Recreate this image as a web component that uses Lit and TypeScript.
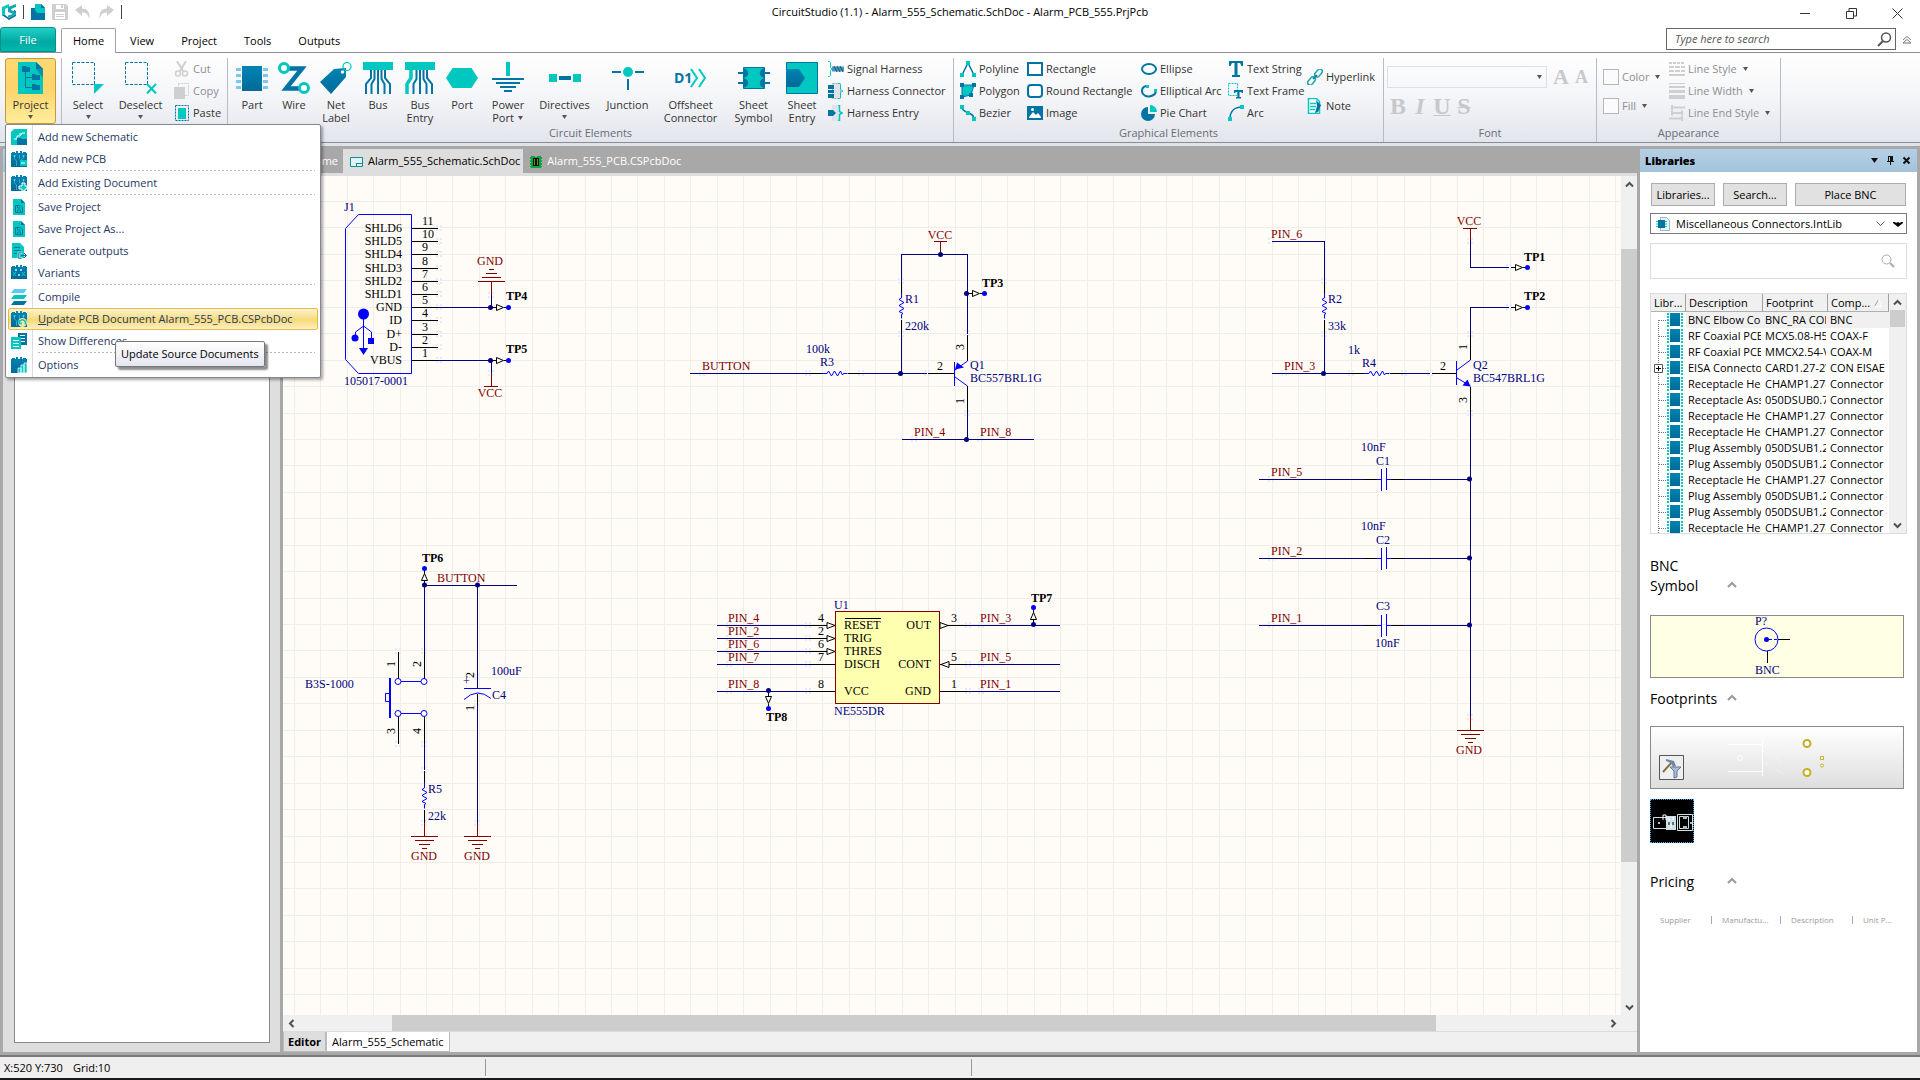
import { LitElement, html, svg, css, nothing } from "lit";
import { customElement, state } from "lit/decorators.js";
import { classMap } from "lit/directives/class-map.js";

const TEAL = "#00c8c0";
const BLUE = "#0074a2";
const GREY = "#cfcfcf";

const icon = (w: number, h: number, body: unknown) =>
  html`<svg class="ic" width=${w} height=${h} viewBox="0 0 ${w} ${h}" aria-hidden="true">${body}</svg>`;

/* ---------- quick access ---------- */
const logoIcon = icon(16, 16, svg`
  <path d="M7 0L0 3v8l3 2V5l4-2z" fill=${TEAL}/><path d="M0 11l7 5 7-4V7l-2-1v5l-5 3-4-3z" fill="#0d6f98"/>
  <path d="M14 0L6 3v5l5 2-5 1.500V14l8-3V8L9 6V5l5-2z" fill="#16a6b4"/>`);
const openIcon = icon(14, 16, svg`
  <path d="M0 4h4l1 2h9v10H0z" fill=${BLUE}/><path d="M4 0h6l4 4v5H6L4 6z" fill=${TEAL}/><path d="M10 0l4 4h-4z" fill=${BLUE}/>`);
const saveIcon = icon(16, 16, svg`
  <path d="M0 0h14l2 2v14H0z" fill=${GREY}/><path d="M4 1h8v4H4zM3 8h10v7H3z" fill="#fff"/><path d="M9 1h2v3H9zM4 10h8v1H4zM4 12h8v1H4z" fill=${GREY}/>`);
const undoIcon = icon(16, 16, svg`<path d="M0 6l7-5v3.500c5 0 8 3 7.500 11C13 10 11 8.500 7 8.500V12z" fill=${GREY}/>`);
const redoIcon = icon(16, 16, svg`<path d="M16 6L9 1v3.500c-5 0-8 3-7.500 11C3 10 5 8.500 9 8.500V12z" fill=${GREY}/>`);

/* ---------- large ribbon icons ---------- */
const big: Record<string, unknown> = {
  project: icon(25, 32, svg`
    <path d="M0 0h18l7 7v25H0z" fill=${TEAL}/><path d="M18 0l7 7v9l-7-9z" fill="#0796a8"/><path d="M18 0l7 7h-7z" fill=${BLUE}/>
    <path d="M4 4h4l1 1h3v5H4zM14 12h3l1 1h4v5h-8zM14 22h3l1 1h4v5h-8z" fill=${BLUE}/>
    <path d="M7.500 10v15.500H14M7.500 15.500H14" fill="none" stroke=${BLUE}/>`),
  select: icon(32, 32, svg`
    <path d="M.5.5h22v22H.5z" fill="none" stroke=${BLUE} stroke-dasharray="3 1.500"/><path d="M22 22h10L22 32z" fill=${TEAL}/>`),
  deselect: icon(32, 32, svg`
    <path d="M.5.5h22v22H.5z" fill="none" stroke=${BLUE} stroke-dasharray="3 1.500"/><path d="M22 22l9 9.500M31 22l-9 9.500" stroke=${TEAL} stroke-width="2"/>`),
  part: icon(32, 32, svg`
    <path d="M6 4h20v25H6z" fill="url(#gb)"/>
    <path d="M0 7.500h5M0 13.500h5M0 19.500h5M0 25.500h5M27 7.500h5M27 13.500h5M27 19.500h5M27 25.500h5" stroke="#7ac9ea" stroke-width="3"/>`),
  wire: icon(32, 32, svg`
    <path d="M7 6.500H24L8 26.500H26" fill="none" stroke=${BLUE} stroke-width="4.500"/>
    <circle cx="6" cy="6" r="4.500" fill="#fff" stroke=${TEAL} stroke-width="3"/><circle cx="26" cy="26" r="4.500" fill="#fff" stroke=${TEAL} stroke-width="3"/>`),
  netlabel: icon(32, 32, svg`
    <path d="M14 7l12-1v9L11 32 0 20z" fill="url(#gb)"/><circle cx="22.500" cy="10" r="1.800" fill="#fff"/>
    <circle cx="27" cy="4.500" r="4" fill="none" stroke=${TEAL} stroke-width="1.200"/>`),
  bus: icon(30, 32, svg`
    <path d="M0 0h30v8H0z" fill=${TEAL}/>
    <path d="M8 8v8l-5 6v10M11.500 8v9l-3 5v10M15 8v24M18.500 8v9l3 5v10M22 8v8l5 6v10" fill="none" stroke=${BLUE} stroke-width="2"/>`),
  busentry: icon(30, 32, svg`
    <path d="M0 0h30v8H0z" fill=${TEAL}/><path d="M6 8v8l-4 6v10" fill="none" stroke=${TEAL} stroke-width="3.500"/>
    <path d="M11.500 8v9l-3 5v10M15 8v24M18.500 8v9l3 5v10M22 8v8l5 6v10" fill="none" stroke=${BLUE} stroke-width="2"/>`),
  port: icon(32, 32, svg`<path d="M6.500 6h19L32 16l-6.500 10h-19L0 16z" fill=${TEAL}/>`),
  powerport: icon(32, 32, svg`
    <path d="M16 0v14" stroke=${TEAL} stroke-width="4"/>
    <path d="M0 17h32M4 21h24M8 25h16M12 29h8" stroke=${BLUE} stroke-width="2"/>`),
  directives: icon(32, 32, svg`
    <path d="M0 12h8v8H0zM24 12h8v8h-8z" fill=${TEAL}/><path d="M10 14h12v4H10z" fill=${BLUE}/>`),
  junction: icon(32, 32, svg`
    <path d="M0 10h9M23 10h9M16 17v11" stroke=${BLUE} stroke-width="2"/><circle cx="16" cy="10" r="5" fill=${TEAL}/>`),
  offsheet: icon(34, 32, svg`
    <text x="0" y="21" class="glyph">D1</text>
    <path d="M17 7l6 9-6 9M25 7l6 9-6 9" fill="none" stroke=${TEAL} stroke-width="2"/>`),
  sheetsymbol: icon(32, 32, svg`
    <path d="M5.500 5.500h21v21h-21z" fill=${TEAL} stroke=${BLUE}/>
    <path d="M0 11h5M0 21h5M27 11h5M27 21h5" stroke=${BLUE} stroke-width="2"/>
    <path d="M5 6c7 1 7 9 0 10zM5 16c7 1 7 9 0 10zM27 6c-7 1-7 9 0 10zM27 16c-7 1-7 9 0 10z" fill=${BLUE}/>`),
  sheetentry: icon(32, 32, svg`
    <path d="M.5.5h31v31H.5z" fill=${TEAL} stroke=${BLUE}/><path d="M0 7h13l6 9-6 9H0z" fill="url(#gb)"/>`),
};

/* ---------- small ribbon icons ---------- */
const small: Record<string, unknown> = {
  cut: icon(16, 16, svg`
    <path d="M3 0l6 10M12 0L6 10" stroke=${GREY} stroke-width="2"/><circle cx="4" cy="12.500" r="2.500" fill="none" stroke=${GREY} stroke-width="1.500"/><circle cx="11" cy="12.500" r="2.500" fill="none" stroke=${GREY} stroke-width="1.500"/>`),
  copy: icon(16, 16, svg`<path d="M4.500.5h10v12h-10z" fill="none" stroke=${GREY} stroke-dasharray="2 1"/><path d="M0 4h11v12H0z" fill=${GREY}/>`),
  paste: icon(16, 16, svg`<path d="M1.500.5h13v15h-13z" fill="none" stroke=${BLUE} stroke-dasharray="2 1"/><path d="M4 3h8v11H4z" fill=${TEAL}/>`),
  sigharness: icon(16, 16, svg`
    <path d="M0 .5h1.500l1 1v5l1.500 1.500-1.500 1.500v5l-1 1H0" fill="none" stroke=${TEAL}/><path d="M4 5.500h12v5H4z" fill="#4a94b8"/><path d="M6 5l3 6M9 5l3 6M12 5l3 6" stroke="#075a80"/>`),
  harnessconn: icon(16, 16, svg`
    <path d="M4.500.5h8v15h-8z" fill="#dfe4ea" stroke="#9aa"  stroke-dasharray="2 1"/>
    <path d="M0 2h6v4H0zM0 7h6v3H0zM0 11h6v4H0z" fill=${BLUE}/><path d="M10 .5h1.500l1 1v5L15 8l-2.500 1.500v5l-1 1H10" fill="none" stroke=${TEAL}/>`),
  harnessentry: icon(16, 16, svg`
    <path d="M4 0h7v16H4z" fill="#dfe4ea"/><path d="M0 5h5l3 3-3 3H0z" fill=${BLUE}/><path d="M10 .5h1.500v6L14 8l-2.500 1.500v6H10" fill="none" stroke=${TEAL} stroke-width="1.500"/>`),
  polyline: icon(16, 16, svg`<path d="M2 14L8 2l6 12" fill="none" stroke=${BLUE} stroke-width="1.500"/><path d="M6 0h4v4H6zM0 12h4v4H0zM12 12h4v4h-4z" fill=${TEAL}/>`),
  polygon: icon(16, 16, svg`<path d="M2 2h12l-3 10-9 2z" fill=${TEAL} stroke=${BLUE}/><path d="M0 0h4v4H0zM12 0h4v4h-4zM0 12h4v4H0zM9 10h4v4H9z" fill=${BLUE}/>`),
  bezier: icon(16, 16, svg`<path d="M2 2c0 7 12 4 12 12" fill="none" stroke=${BLUE} stroke-width="1.500"/><path d="M0 0h4v4H0zM6 6h4v4H6zM12 12h4v4h-4z" fill=${TEAL}/>`),
  rectangle: icon(16, 16, svg`<path d="M1 2h14v12H1z" fill="#fff" stroke=${BLUE} stroke-width="2"/>`),
  roundrect: icon(16, 16, svg`<rect x="1" y="2" width="14" height="12" rx="3" fill="#fff" stroke=${BLUE} stroke-width="2"/>`),
  image: icon(16, 16, svg`<path d="M0 1h16v14H0z" fill=${BLUE}/><path d="M2 12l4-5 3 3 2-2 3 4v1H2z" fill="#fff"/><circle cx="5.500" cy="4.500" r="1.500" fill="#fff"/>`),
  ellipse: icon(16, 16, svg`<ellipse cx="8" cy="8" rx="7" ry="5" fill="#fff" stroke=${BLUE} stroke-width="2"/>`),
  ellarc: icon(16, 16, svg`<path d="M6 3C1 3 0 8 2 11c3 4 12 3 13-3" fill="none" stroke=${BLUE} stroke-width="2"/><path d="M5 2h3v3H5zM13 6h3v3h-3z" fill=${TEAL}/>`),
  pie: icon(16, 16, svg`<path d="M7 2v7h7a7 7 0 1 1-7-7z" fill=${BLUE}/><path d="M9 0a7 7 0 0 1 7 7H9z" fill=${TEAL}/>`),
  textstring: icon(16, 16, svg`<path d="M1 0h14v5h-1.500L12 2h-2.500v12H12v2H4v-2h2.500V2H4L2.500 5H1z" fill=${BLUE}/>`),
  textframe: icon(16, 16, svg`<path d="M.5.5h9v12h-9z" fill="none" stroke=${TEAL} stroke-dasharray="2 1"/><path d="M6 7h9v3h-1l-1-1h-1.500v5H13v1.500H8V14h1.500V9H8l-1 1H6z" fill=${BLUE}/>`),
  arc: icon(16, 16, svg`<path d="M2 14C2 7 6 2 14 2" fill="none" stroke=${BLUE} stroke-width="1.500"/><path d="M0 12h4v4H0zM12 0h4v4h-4z" fill=${TEAL}/>`),
  hyperlink: icon(16, 16, svg`
    <rect x="7" y="1.500" width="9" height="5" rx="2.500" transform="rotate(-50 11.500 4)" fill="none" stroke="#1aa3a8" stroke-width="1.500"/>
    <rect x="0" y="9.500" width="9" height="5" rx="2.500" transform="rotate(-50 4.500 12)" fill="none" stroke="#1aa3a8" stroke-width="1.500"/><path d="M6 10l4-4" stroke=${BLUE} stroke-width="1.500"/>`),
  note: icon(16, 16, svg`
    <path d="M1.500.5h8l3 3v12h-11z" fill="#fff" stroke=${TEAL} stroke-width="1.500"/><path d="M3 5.500h6M3 8.500h6M3 11.500h5" stroke=${TEAL} stroke-width="1.500"/><path d="M9 2l5 5-3 7-3 1 2-7z" fill=${BLUE}/>`),
  linestyle: icon(16, 16, svg`<path d="M0 2h16" stroke=${GREY} stroke-width="2" stroke-dasharray="3 1"/><path d="M0 6h16M0 10h16" stroke=${GREY} stroke-width="2" stroke-dasharray="5 1"/><path d="M0 14h16" stroke=${GREY} stroke-width="2"/>`),
  linewidth: icon(16, 16, svg`<path d="M0 0h16v1H0zM0 3h16v2H0zM0 7h16v3H0zM0 12h16v4H0z" fill=${GREY}/>`),
  lineend: icon(16, 16, svg`<path d="M2 2.500h14M2 8h12M0 13.500h14M3 0v5M3 5.500v5M13 5.500v5M13 11v5" stroke=${GREY} stroke-width="2"/>`),
};

/* ---------- menu icons ---------- */
const boardShape = "M0 2h1V1h3v1h1V0h2v2h2V0h2v2h1V1h3v1h1v14H0z";
const board = svg`
  <path d=${boardShape} fill="url(#gb)"/>
  <path d="M3.500 5v3l2 2v5M8.500 4v4M12.500 5v2l-3 2" fill="none" stroke="#2fa8d0"/>
  <circle cx="3.500" cy="5" r="1" fill="#5fd0e8"/><circle cx="12.500" cy="5" r="1" fill="#5fd0e8"/>`;
const menuIcons: Record<string, unknown> = {
  schematic: icon(16, 16, svg`<path d="M0 3l3-3h13v16H0z" fill=${TEAL}/><path d="M3 10h3V7h3l2-3h3M8 5h3" fill="none" stroke="#fff"/><path d="M6 9h4l1 1h5v6H6z" fill=${BLUE}/>`),
  pcb: icon(16, 16, svg`${board}<path d="M9 9h7v6H9z" fill=${TEAL}/><path d="M11 11v2M13 11v2" stroke="#fff"/>`),
  existing: icon(16, 16, svg`${board}<path d="M8 11h3V8h3v3h2v3h-2v2h-3v-2H8z" fill=${TEAL} stroke="#fff"/>`),
  save: icon(16, 16, svg`<path d="M2 0h8l4 4v12H2z" fill=${TEAL}/><path d="M10 0l4 4h-4z" fill=${BLUE}/><path d="M4.500 6.500h5l2 2v5h-7zM6.500 7v2h3M6.500 13v-2h3v2" fill="none" stroke=${BLUE}/>`),
  generate: icon(16, 16, svg`<path d="M1 0h8l4 4v11H1z" fill=${TEAL}/><path d="M3 4.500h6M3 7.500h7M3 10.500h3" stroke=${BLUE}/><path d="M7 9h4v1.500H8.500v4H11V16H7z" fill=${BLUE} stroke="#fff" stroke-width=".5"/><path d="M10 12.500h5M13 10l2.500 2.500L13 15" fill="none" stroke=${BLUE}/>`),
  variants: icon(16, 16, svg`<path d="M0 2h1V1h3v1h1V0h2v2h2V0h2v2h1V1h3v1h1v12H0z" fill="url(#gb)"/><path d="M2 7l3 4M5 7l-3 4M11 7l3 4M14 7l-3 4" stroke=${TEAL}/><path d="M4 4h2v2H4zM9 4h2v2H9zM7 9h2v2H7z" fill="#8fdcf0"/>`),
  compile: icon(16, 16, svg`<path d="M3 0h13l-3 4H0z" fill="#5bcbf2"/><path d="M3 6h13l-3 4H0z" fill=${TEAL}/><path d="M3 12h13l-3 4H0z" fill=${BLUE}/>`),
  update: icon(16, 16, svg`${board}<circle cx="11.500" cy="11.500" r="4.500" fill="#f7e6a0"/><path d="M8.500 12a3 3 0 1 1 5.500 1.500M8 9v3.500h3" fill="none" stroke=${TEAL} stroke-width="1.500"/>`),
  differences: icon(16, 16, svg`<path d="M7 0h9v12H7z" fill=${BLUE}/><path d="M9 2.500h5M9 5.500h5M9 8.500h5" stroke="#fff"/><path d="M0 4h10v12H0z" fill=${TEAL}/><path d="M2 7.500h6M2 10.500h6M2 13.500h6" stroke="#fff"/>`),
  options: icon(16, 16, svg`<path d=${boardShape} fill="url(#gb)"/><path d="M7 11h3v5H7zM10 8h3v8h-3zM13 6h3v10h-3z" fill=${TEAL} stroke="#fff" stroke-width=".7"/>`),
};

const arrow = html`<svg class="arrow" width="7" height="4" viewBox="0 0 7 4" aria-hidden="true"><path d="M1 0h5L3.500 4z" fill="#555"/></svg>`;
const chevron = (d: string) =>
  html`<svg class="ic" width="9" height="9" viewBox="0 0 9 9" aria-hidden="true"><path d=${d} fill="none" stroke="#505050" stroke-width="2"/></svg>`;
const UP = "M1 6.500L4.500 3 8 6.500";
const DOWN = "M1 2.500L4.500 6 8 2.500";
const LEFT = "M6.500 1L3 4.500 6.500 8";
const RIGHT = "M2.500 1L6 4.500 2.500 8";

/* ---------- schematic primitives ---------- */
type Kind = "navy" | "blk" | "blu" | "red";
const h = (y: number, x1: number, x2: number, k: Kind = "navy") => svg`<path class=${k} d="M${x1} ${y + 0.5}H${x2}"/>`;
const v = (x: number, y1: number, y2: number, k: Kind = "navy") => svg`<path class=${k} d="M${x + 0.5} ${y1}V${y2}"/>`;
const t = (x: number, y: number, s: string, c = "tn") => svg`<text class=${c} x=${x} y=${y}>${s}</text>`;
const rot = (cx: number, cy: number, s: string) =>
  svg`<text class="tk mid" transform="translate(${cx + 4} ${cy}) rotate(-90)">${s}</text>`;
const dot = (x: number, y: number) => svg`<circle class="dot" cx=${x} cy=${y} r="2.500"/>`;
const end = (x: number, y: number) =>
  svg`<path class="end" d="M${x - 3} ${y - 3}h2v2h-2zM${x + 1} ${y - 3}h2v2h-2zM${x - 3} ${y + 1}h2v2h-2zM${x + 1} ${y + 1}h2v2h-2z"/>`;
const probe = (x: number, y: number, a: number) => svg`
  <g transform="translate(${x + 0.5} ${y + 0.5}) rotate(${a})">
    <path class="blk" d="M0 0H6M12 0H16"/><path class="tri" d="M5 -3L12 0L5 3z"/><circle class="pt" cx="17" cy="0" r="2.500"/>
  </g>`;
const arrowhead = (x: number, y: number, a: number) =>
  svg`<path class="tri" transform="translate(${x} ${y + 0.5}) rotate(${a})" d="M0 -3L8 0L0 3z"/>`;
const gnd = (x: number, y: number, dir = 1) =>
  [13, 9, 5, 2].map((w, i) => h(y + dir * i * 4, x - w, x + w + 1, "red"));
const zigH = (x: number, y: number) =>
  svg`<path class="zig" d="M${x} ${y + 0.5}h5l1.500 -2.500l3 5l3 -5l3 5l3 -5l2 4l1 -1.500h4"/>`;
const zigV = (x: number, y: number) =>
  svg`<path class="zig" d="M${x + 0.5} ${y}v5l-2.500 1.500l5 3l-5 3l5 3l-5 3l4 2l-1.500 1v4"/>`;

const cap = (y: number, pin: string) => [
  end(1271, y), h(y, 1259, 1364), h(y, 1364, 1377, "blk"), h(y, 1377, 1381, "blu"), v(1381, y - 10, y + 12, "blu"),
  v(1386, y - 11, y + 11, "blu"), h(y, 1386, 1391, "blu"), h(y, 1391, 1404, "blk"), h(y, 1404, 1470), dot(1469.5, y),
  t(1271, y - 3, pin, "tr"),
];

const schematic = () => {
  const grid: unknown[] = [];
  for (let i = -1; i < 52; i++) {
    const x = Math.round(1245.3 - 36 * 26.43 + i * 26.43);
    if (x >= 283) grid.push(svg`<path class="grid" d="M${x + 0.5} 176V1015"/>`);
    const y = Math.round(201 + (i - 1) * 26.44);
    if (y < 1015) grid.push(svg`<path class="grid" d="M283 ${y + 0.5}H1620"/>`);
  }
  const names = ["SHLD6", "SHLD5", "SHLD4", "SHLD3", "SHLD2", "SHLD1", "GND", "ID", "D+", "D-", "VBUS"];
  const left: [number, string, string, string][] = [
    [625, "PIN_4", "4", "RESET"], [638, "PIN_2", "2", "TRIG"], [651, "PIN_6", "6", "THRES"], [664, "PIN_7", "7", "DISCH"], [691, "PIN_8", "8", "VCC"],
  ];
  const right: [number, string, string, string][] = [
    [625, "PIN_3", "3", "OUT"], [664, "PIN_5", "5", "CONT"], [691, "PIN_1", "1", "GND"],
  ];
  return svg`<g transform="translate(-283 -176)">
    ${grid}
    <!-- J1 connector -->
    ${t(344, 211, "J1")}
    <path class="zig" d="M345.500 228.500L358.500 214.500H411.500V373.500H358.500L345.500 359.500z"/>
    ${names.map((n, i) => {
      const y = Math.round(228 + i * 13.2);
      return [end(439, y), h(y, 412, 438, "blk"), t(402, y + 4, n, "tk end-a"), t(422, y - 3, String(11 - i), "tk")];
    })}
    <circle cx="363.500" cy="314" r="5.500" class="fb"/><circle cx="355" cy="338" r="3.500" class="fb"/><path class="fb" d="M368 338h6v6h-6zM359 348h9l-4.500 7z"/>
    <path class="zig" d="M363.500 314V350M355.500 338V332L363.500 326L371.500 332V340"/>
    ${t(344, 385, "105017-0001")}
    ${h(307, 438, 491)}${end(491, 295)}${v(491, 295, 307)}${v(491, 281, 295, "red")}${gnd(491, 281, -1)}${t(490, 265, "GND", "tr mid")}
    ${dot(490.5, 307.5)}${probe(491, 307, 0)}${t(506, 300, "TP4", "tb")}
    ${h(360, 438, 491)}${end(491, 373)}${v(491, 360, 373)}${v(491, 373, 386, "red")}${h(386, 484, 498, "red")}${t(490, 397, "VCC", "tr mid")}
    ${dot(490.5, 360.5)}${probe(491, 360, 0)}${t(506, 353, "TP5", "tb")}

    <!-- Q1 stage -->
    ${t(940, 239, "VCC", "tr mid")}${h(241, 934, 947, "red")}${v(940, 241, 254, "red")}${h(254, 901, 968)}${dot(940.5, 254.5)}
    ${end(901, 281)}${v(901, 254, 282)}${v(901, 282, 294, "blk")}${zigV(901, 293)}${v(901, 320, 334, "blk")}${end(901, 334)}${v(901, 334, 373)}
    ${t(905, 303, "R1")}${t(905, 330, "220k")}
    ${end(967, 333)}${v(967, 254, 334)}${v(967, 335, 361, "blk")}${dot(966.5, 293.5)}${probe(967, 293, 0)}${t(982, 287, "TP3", "tb")}
    ${t(806, 353, "100k")}${t(820, 366, "R3")}${t(702, 370, "BUTTON", "tr")}
    ${end(702, 373)}${end(808, 373)}${h(373, 690, 810)}${h(373, 810, 822, "blk")}${zigH(822, 373)}${h(373, 848, 861, "blk")}${end(861, 373)}${h(373, 861, 927)}${end(927, 373)}${h(373, 928, 955, "blk")}
    ${dot(900.5, 373.5)}${t(937, 370, "2", "tk")}
    ${v(954, 362, 386, "blu")}<path class="zig" d="M955 370L967.500 361M955 377L967.500 386"/><path class="fb" d="M955 369.500l2-7 7 5z"/>
    ${rot(960, 347, "3")}${rot(960, 401, "1")}
    ${v(967, 386, 413, "blk")}${end(967, 413)}${v(967, 413, 440)}${end(914, 439)}${end(980, 439)}${h(439, 902, 1034)}${dot(966.5, 439.5)}
    ${t(914, 436, "PIN_4", "tr")}${t(980, 436, "PIN_8", "tr")}${t(970, 369, "Q1")}${t(970, 382, "BC557BRL1G")}

    <!-- Q2 stage -->
    ${t(1271, 238, "PIN_6", "tr")}${end(1271, 241)}${h(241, 1272, 1325)}${end(1324, 281)}${v(1324, 241, 282)}${v(1324, 282, 294, "blk")}${zigV(1324, 293)}${v(1324, 320, 334, "blk")}${end(1324, 334)}${v(1324, 334, 373)}
    ${t(1328, 303, "R2")}${t(1328, 330, "33k")}
    ${t(1284, 370, "PIN_3", "tr")}${end(1284, 373)}${h(373, 1272, 1350)}${dot(1323.5, 373.5)}${end(1351, 373)}${h(373, 1350, 1365, "blk")}${zigH(1364, 373)}${h(373, 1390, 1404, "blk")}${end(1404, 373)}${h(373, 1404, 1430)}${end(1430, 373)}${h(373, 1432, 1457, "blk")}
    ${t(1348, 354, "1k")}${t(1362, 367, "R4")}${t(1440, 370, "2", "tk")}
    ${v(1456, 361, 385, "blu")}<path class="zig" d="M1457 370L1470.500 360M1457 378L1470.500 386"/><path class="fb" d="M1470.500 386.500l-8-1 5-6z"/>
    ${rot(1463, 347, "1")}${rot(1463, 400, "3")}
    ${end(1470, 334)}${v(1470, 335, 360, "blk")}${v(1470, 307, 335)}${h(307, 1470, 1509)}${end(1509, 307)}${probe(1510, 307, 0)}${t(1524, 300, "TP2", "tb")}
    ${t(1469, 225, "VCC", "tr mid")}${h(228, 1463, 1477, "red")}${v(1470, 228, 241, "red")}${end(1470, 241)}${v(1470, 241, 268)}${h(267, 1470, 1509)}${end(1509, 267)}${probe(1510, 267, 0)}${t(1524, 261, "TP1", "tb")}
    ${t(1473, 369, "Q2")}${t(1473, 382, "BC547BRL1G")}
    ${v(1470, 387, 412, "blk")}${end(1470, 413)}${v(1470, 412, 717)}${end(1470, 717)}${v(1470, 717, 730, "red")}${gnd(1470, 730)}${t(1469, 754, "GND", "tr mid")}
    ${cap(479, "PIN_5")}${t(1361, 451, "10nF")}${t(1376, 465, "C1")}
    ${cap(558, "PIN_2")}${t(1361, 530, "10nF")}${t(1376, 544, "C2")}
    ${cap(625, "PIN_1")}${t(1376, 610, "C3")}${t(1375, 647, "10nF")}

    <!-- push button -->
    ${t(422, 562, "TP6", "tb")}${probe(424, 585, -90)}${h(585, 424, 517)}${dot(424.5, 585)}${dot(477.5, 585)}${t(437, 582, "BUTTON", "tr")}
    ${end(424, 651)}${end(398, 651)}${v(424, 585, 652)}${v(424, 652, 679, "blk")}${v(398, 652, 679, "blk")}${v(398, 716, 744, "blk")}${v(424, 716, 744, "blk")}${end(398, 744)}${end(424, 744)}
    ${h(681, 401, 421, "blu")}${h(713, 401, 421, "blu")}
    ${[[398, 681], [424, 681], [398, 713], [424, 713]].map(([x, y]) => svg`<circle class="zig open" cx=${x} cy=${y + 0.5} r="3"/>`)}
    <path class="fb" d="M389 678h2v40h-2z"/><path class="zig" d="M389.500 693.500h-4v8h4"/>
    ${rot(391, 664, "1")}${rot(417, 664, "2")}${rot(391, 731, "3")}${rot(417, 731, "4")}${t(305, 688, "B3S-1000")}
    ${v(424, 744, 770)}${end(424, 770)}${v(424, 771, 784, "blk")}${zigV(424, 783)}${v(424, 810, 824, "blk")}${end(424, 823)}${v(424, 823, 836, "red")}${gnd(424, 836)}
    ${t(428, 793, "R5")}${t(428, 820, "22k")}${t(424, 860, "GND", "tr mid")}
    <!-- C4 -->
    ${v(477, 585, 688)}${end(477, 677)}${h(688, 464, 491, "blu")}<path class="zig" d="M464 699.500Q477.500 687 491 698.500"/>${v(477, 694, 705, "blk")}${end(477, 703)}${v(477, 705, 823)}${end(477, 823)}${v(477, 823, 836, "red")}${gnd(477, 836)}
    ${t(463, 685, "+")}${rot(470, 675, "2")}${rot(470, 708, "1")}${t(491, 675, "100uF")}${t(492, 699, "C4")}${t(477, 860, "GND", "tr mid")}

    <!-- U1 timer -->
    <path class="chip" d="M835.500 611.500H939.500V703.500H835.500z"/>
    ${t(834, 609, "U1")}${t(834, 715, "NE555DR")}
    ${left.map(([y, net, n, name]) => [end(729, y), end(808, y), h(y, 717, 809), h(y, 809, 835, "blk"), t(728, y - 3, net, "tr"), t(818, y - 3, n, "tk"), t(844, y + 4, name, "tk")])}
    ${arrowhead(827, 625, 0)}${arrowhead(827, 638, 0)}${arrowhead(827, 651, 0)}${h(618, 845, 881, "blk")}
    ${right.map(([y, net, n, name]) => [end(968, y), end(981, y), h(y, 940, 967, "blk"), h(y, 967, 1060), t(980, y - 3, net, "tr"), t(951, y - 3, n, "tk"), t(931, y + 4, name, "tk end-a")])}
    ${arrowhead(940, 625, 0)}${arrowhead(949, 664, 180)}
    ${probe(1033, 624, -90)}${dot(1033.5, 624.5)}${t(1031, 602, "TP7", "tb")}
    ${probe(768, 691, 90)}${dot(768.5, 690.5)}${t(766, 721, "TP8", "tb")}
  </g>`;
};

type BigItem = { id: string; label: string; second?: string; size: string; drop?: boolean };
const circuit: BigItem[] = [
  { id: "part", label: "Part", size: "s" }, { id: "wire", label: "Wire", size: "s" },
  { id: "netlabel", label: "Net", second: "Label", size: "s" }, { id: "bus", label: "Bus", size: "s" },
  { id: "busentry", label: "Bus", second: "Entry", size: "s" }, { id: "port", label: "Port", size: "s" },
  { id: "powerport", label: "Power", second: "Port", size: "m", drop: true }, { id: "directives", label: "Directives", size: "l", drop: true },
  { id: "junction", label: "Junction", size: "l" }, { id: "offsheet", label: "Offsheet", second: "Connector", size: "l" },
  { id: "sheetsymbol", label: "Sheet", second: "Symbol", size: "l" }, { id: "sheetentry", label: "Sheet", second: "Entry", size: "xs" },
];
const graphical: [string, string][] = [
  ["polyline", "Polyline"], ["polygon", "Polygon"], ["bezier", "Bezier"],
  ["rectangle", "Rectangle"], ["roundrect", "Round Rectangle"], ["image", "Image"],
  ["ellipse", "Ellipse"], ["ellarc", "Elliptical Arc"], ["pie", "Pie Chart"],
  ["textstring", "Text String"], ["textframe", "Text Frame"], ["arc", "Arc"],
];
const menu: [string, string, boolean?][] = [
  ["schematic", "Add new Schematic"], ["pcb", "Add new PCB", true], ["existing", "Add Existing Document", true],
  ["save", "Save Project"], ["save", "Save Project As..."], ["generate", "Generate outputs"], ["variants", "Variants", true],
  ["compile", "Compile"], ["update", "Update PCB Document Alarm_555_PCB.CSPcbDoc"], ["differences", "Show Differences", true], ["options", "Options"],
];
const parts: [string, string, string][] = [
  ["BNC Elbow Co", "BNC_RA CON", "BNC"], ["RF Coaxial PCB", "MCX5.08-H5", "COAX-F"], ["RF Coaxial PCB", "MMCX2.54-V", "COAX-M"],
  ["EISA Connecto", "CARD1.27-2V", "CON EISAE"], ["Receptacle Hea", "CHAMP1.27-", "Connector"], ["Receptacle Ass", "050DSUB0.70", "Connector"],
  ["Receptacle Hea", "CHAMP1.27-", "Connector 2"], ["Receptacle Hea", "CHAMP1.27-", "Connector 2"], ["Plug Assembly,", "050DSUB1.27", "Connector"],
  ["Plug Assembly,", "050DSUB1.27", "Connector"], ["Receptacle Hea", "CHAMP1.27-", "Connector"], ["Plug Assembly,", "050DSUB1.27", "Connector 4"],
  ["Plug Assembly,", "050DSUB1.27", "Connector 4"], ["Receptacle Hea", "CHAMP1.27-", "Connector"],
];

@customElement("app-root")
export class AppRoot extends LitElement {
  @state() private menuOpen = true;

  static styles = css`
    :host { display: flex; flex-direction: column; height: 100vh; overflow: hidden; background: #fff; color: #000; font: 11px/14px "Open Sans", "Noto Sans", sans-serif; }
    * { box-sizing: border-box; }
    button, input, select { font: inherit; color: inherit; margin: 0; padding: 0; border: 0; background: none; border-radius: 0; }
    .ic, .arrow { display: block; flex: none; }
    .defs { display: block; width: 0; height: 0; }
    .glyph { font: bold 14px "Open Sans", sans-serif; fill: #0074a2; }

    .title { display: grid; grid-template-columns: 1fr auto 1fr; height: 27px; flex: none; }
    .quick { display: flex; align-items: center; gap: 7px; padding: 0 2px 3px; }
    .quick .bar { width: 1px; height: 14px; background: #444; margin-left: -2px; }
    .quick .bar.last { margin-left: 0; }
    .caption { align-self: center; padding-bottom: 3px; }
    .win { display: flex; justify-content: flex-end; }
    .win button { display: grid; place-items: center; width: 46px; }

    .tabs { display: flex; align-items: stretch; height: 26px; flex: none; border-bottom: 1px solid #8a8d94; }
    .file { width: 56px; margin: 0 5px 0 0; color: #fff; background: linear-gradient(#22d0c8, #00a8a0 60%, #00b8b0); border: 1px solid #00908c; border-radius: 3px 3px 0 0; }
    .tab { padding: 0 12px 0 13px; margin-top: 1px; border: 1px solid transparent; border-bottom: 0; }
    .tab.on { padding: 0 11px; border-color: #a0a3aa; border-radius: 2px 2px 0 0; background: #fff; margin-bottom: -1px; }
    .find { display: flex; align-items: center; gap: 4px; width: 230px; height: 22px; margin: 1px 6px 0 auto; border: 1px solid #666; padding: 0 3px 0 8px; }
    .find input { flex: 1; min-width: 0; outline: 0; font-style: italic; }
    .find input::placeholder { color: #555; opacity: 1; }
    .fold { width: 18px; display: grid; place-items: center start; }

    .ribbon { display: flex; flex: none; height: 90px; padding-top: 5px; background: linear-gradient(#fff, #f4f5f8 50%, #e2e5ec); border-bottom: 1px solid #8a8d94; color: #333; }
    .group { display: flex; flex-direction: column; flex: none; border-right: 1px solid #b8bbc2; }
    .items { display: flex; height: 66px; }
    .glabel { flex: 1; display: grid; place-items: center; color: #6a6d75; }
    .big { display: flex; flex: none; flex-direction: column; align-items: center; padding: 4px 0 0; line-height: 13px; }
    .big .ic { margin-bottom: 4px; }
    .big .arrow { margin-top: 4px; }
    .big .second { display: flex; align-items: center; gap: 3px; }
    .big .second .arrow { margin: 0; }
    .xs { width: 34px; } .s { width: 42px; } .m { width: 50px; } .d { width: 55px; } .l { width: 63px; }
    .anchor { position: relative; padding: 0 5px; display: flex; }
    .proj { width: 51px; border: 1px solid #c8993c; border-radius: 3px; padding-top: 3px; background: linear-gradient(#fcd975, #fdd36a 45%, #ffee9c); }
    .edit { width: 166px; padding-left: 1px; }
    .edit .col { padding-left: 4px; }
    .col { display: flex; flex-direction: column; }
    .sm { display: flex; align-items: center; gap: 3px; height: 22px; padding: 0 2px; white-space: nowrap; text-align: left; }
    .off { color: #8d8f94; }
    .circuit .items { padding-left: 3px; }
    .harness { width: 134px; padding-left: 7px; }
    .graph .items { padding-left: 4px; }
    .gcols { display: grid; grid-auto-flow: column; grid-template-rows: repeat(3, 22px); grid-template-columns: 67px 114px 87px 79px; }
    .links { width: 78px; padding-top: 8px; gap: 7px; }
    .fonts { width: 213px; }
    .fonts .items { flex-direction: column; padding: 8px 3px 0; gap: 7px; }
    .frow { display: flex; align-items: center; gap: 6px; height: 22px; font: bold 22px/22px "Liberation Serif", serif; color: #c6c8cc; }
    .fonts select { width: 160px; height: 22px; border: 1px solid #dde0e8; appearance: none; background: none; }
    .pick { position: relative; display: flex; }
    .pick .arrow { position: absolute; right: 4px; top: 9px; pointer-events: none; }
    .frow .less { font-size: 18px; }
    .frow.bius { gap: 0; font-size: 24px; }
    .bius button { width: 22px; }
    .it { font-style: italic; } .un { text-decoration: underline; text-decoration-thickness: 1px; } .st { text-decoration: line-through; text-decoration-thickness: 1px; }
    .appear { width: 184px; }
    .appear .items { padding-left: 4px; }
    .appear .links { width: 66px; }
    .swatch { width: 16px; height: 16px; border: 1px solid #b4b6bb; background: #fbfbfc; }
    .sm .arrow { margin-left: 2px; }

    .menu { position: absolute; left: 5px; top: 66px; z-index: 5; width: 316px; padding: 1px 2px; background: linear-gradient(90deg, #fff 26px, #d9dce2 26px, #d9dce2 27px, #fff 27px); border: 1px solid #85888f; border-radius: 2px; box-shadow: 2px 2px 3px rgba(0,0,0,.35); }
    .mi { position: relative; display: flex; align-items: center; gap: 11px; width: 100%; height: 22px; padding: 0 2px; color: #1f3864; border: 1px solid transparent; border-radius: 2px; text-align: left; }
    .mi.hot { border-color: #e3bb45; background: linear-gradient(#fdf3cf, #f7df88 45%, #f6da78 55%, #fbf0c4); }
    .mi .key::first-letter { text-decoration: underline; }
    .key { display: inline-block; }
    .sep { height: 2px; margin: 0 3px 0 30px; background: repeating-linear-gradient(90deg, #b8b8b8 0 2px, transparent 2px 4px) 0 0 / 100% 1px no-repeat; }
    .tip { position: absolute; left: 106px; top: 32px; z-index: 6; padding: 5px; height: 26px; white-space: nowrap; color: #000; background: linear-gradient(#fff, #e4e5f0); border: 1px solid #767676; border-radius: 2px; box-shadow: 3px 3px 2px rgba(0,0,0,.45); }

    main { flex: 1; min-height: 0; display: flex; gap: 3px; padding: 3px; background: #a8a8a8; border-top: 3px solid #dfe2e8; }
    .side { width: 277px; flex: none; display: flex; flex-direction: column; background: #dedede; }
    .phead { display: flex; align-items: center; gap: 7px; height: 23px; flex: none; padding: 0 6px 0 5px; font-weight: bold; background: linear-gradient(#b4d0e5, #a4c3da); }
    .phead b { flex: 1; }
    .tree { flex: 1; margin: 8px 10px 9px 11px; background: #fff; border: 1px solid #8a8a8a; }

    .center { flex: 1; min-width: 0; display: flex; flex-direction: column; }
    .docs { display: flex; height: 24px; flex: none; color: #fff; }
    .docs button { display: flex; align-items: center; gap: 5px; padding: 0 3px 0 7px; }
    .docs .home { width: 60px; justify-content: flex-end; padding-right: 5px; }
    .docs .on { background: #dedede; color: #000; }
    .work { flex: 1; min-height: 0; display: grid; grid-template-columns: 1fr 16px; grid-template-rows: 1fr 16px; border-top: 3px solid #dedede; background: #f0f0f0; }
    .canvas { display: block; width: 100%; height: 100%; min-height: 0; overflow: hidden; background: #fffcf7; }
    .vs, .hs { display: flex; align-items: center; background: #f0f0f0; }
    .vs { flex-direction: column; }
    .vs button, .hs button { width: 16px; height: 16px; display: grid; place-items: center; flex: none; }
    .thumb { background: #cdcdcd; align-self: stretch; }
    .hs .a { flex: 93; } .hs .thumb { flex: 1041; } .hs .b { flex: 169; }
    .vs .a { flex: 57; } .vs .thumb { flex: 611; } .vs .b { flex: 137; }
    .btabs { display: flex; flex: none; height: 21px; background: #f0f0f0; border-top: 1px solid #dcdcdc; }
    .btabs button { padding: 0 5px; border: 1px solid #bbb; border-top: 0; }
    .btabs .ed { font-weight: bold; background: #dedede; padding: 0 4px; }
    .btabs .on { background: #fff; }

    .libs { background: #fff; }
    .lbody { padding: 11px 10px; display: flex; flex-direction: column; }
    .brow { display: flex; gap: 8px; padding: 0 1px; }
    .brow button { width: 64px; height: 23px; background: #e1e1e1; border: 1px solid #adadad; }
    .brow .wide { flex: 1; }
    .combo { display: flex; align-items: center; gap: 6px; height: 21px; margin-top: 7px; padding: 0 3px 0 5px; border: 1px solid #7a7a7a; }
    .combo select { flex: 1; min-width: 0; appearance: none; outline: 0; }
    .combo .more { margin-left: 2px; }
    .filter { display: flex; align-items: center; height: 36px; margin: 9px 0 14px; border: 1px solid #dcdcdc; padding: 0 11px 0 6px; }
    .filter input { flex: 1; min-width: 0; outline: 0; }
    .list { display: flex; height: 241px; overflow: hidden; border: 1px solid #dcdcdc; }
    .list table { flex: 1; width: 239px; align-self: flex-start; table-layout: fixed; border-collapse: separate; border-spacing: 0; }
    .c1 { width: 35px; } .c2 { width: 77px; } .c3 { width: 65px; }
    th { font-weight: normal; text-align: left; }
    .list th { height: 18px; padding: 0 0 0 3px; background: #f0f0f0; border-right: 1px solid #a0a0a0; border-bottom: 1px solid #b0b0b0; white-space: nowrap; }
    .sort { display: flex; align-items: center; gap: 4px; }
    .list td { height: 16px; padding: 0 2px; line-height: 16px; white-space: nowrap; }
    .list td:first-child { padding: 0; }
    .list td span { display: block; height: 16px; overflow: hidden; }
    .row1 td:not(:first-child) { background: #f0f0f0; }
    .list .vs { width: 17px; background: #f0f0f0; }
    .list .vs .thumb { flex: none; height: 17px; margin: 0 1px; }
    .list .vs .b { flex: 1; }
    h2 { margin: 0; font-size: 14px; line-height: 20px; font-weight: normal; width: 77px; }
    .part { margin-top: 22px; }
    .sec { display: flex; align-items: center; height: 20px; }
    .sec .ic { margin-bottom: 3px; }
    .pv { display: block; width: 254px; height: 63px; border: 1px solid #8b8b86; }
    .sym { background: #ffffe6; margin: 19px 0 11px; }
    .fp { background: linear-gradient(#fff, #dedede); margin: 17px 0 10px; }
    .thumbnail { width: 44px; height: 44px; border: 1px dotted #4aa3e8; background: #000; margin-bottom: 29px; }
    .prices { width: 257px; margin-top: 22px; table-layout: fixed; border-collapse: collapse; font-size: 8px; line-height: 12px; color: #9a9a9a; }
    .prices th { padding: 0; height: 12px; }
    .prices span { display: block; height: 8px; line-height: 8px; padding-left: 10px; border-right: 1px solid #aaa; }
    .prices th:last-child span { border: 0; }
    .p1 { width: 62px; } .p2 { width: 69px; } .p3 { width: 72px; }

    footer { display: flex; align-items: center; height: 25px; flex: none; background: #efefef; border-top: 2px solid #77797c; border-bottom: 2px solid #1a1a1e; padding-left: 4px; }
    footer .pos { display: flex; gap: 10px; width: 481px; }
    footer .cell { width: 486px; height: 17px; border-left: 1px solid #9a9a9a; }

    .grid { stroke: #efeeeb; shape-rendering: crispEdges; }
    .navy, .blk, .blu, .red { fill: none; shape-rendering: crispEdges; }
    .navy { stroke: #000080; } .blk { stroke: #000; } .blu { stroke: #0000ff; } .red { stroke: #800000; }
    .zig { fill: none; stroke: #0000ff; }
    .open { fill: #fffcf7; }
    .fb, .pt { fill: #0000ff; }
    .dot { fill: #000080; }
    .end { fill: #e6ecf6; shape-rendering: crispEdges; }
    .tri { fill: #fffcf7; stroke: #000; }
    .chip { fill: #ffffb0; stroke: #800000; shape-rendering: crispEdges; }
    .tn, .tr, .tk, .tb { font: 12px "Liberation Serif", "Times New Roman", serif; }
    .tn { fill: #000080; } .tr { fill: #800000; } .tk { fill: #000; } .tb { font-weight: bold; fill: #000; }
    .mid { text-anchor: middle; } .end-a { text-anchor: end; }
  `;

  private bigButton(i: BigItem) {
    return html`<button class="big ${i.size}">${big[i.id]}<span>${i.label}</span>
      ${i.second ? html`<span class="second">${i.second}${i.drop ? arrow : nothing}</span>` : i.drop ? arrow : nothing}</button>`;
  }

  private sm(id: string, label: string, off = false, drop = false) {
    return html`<button class=${classMap({ sm: true, off })}>${small[id]}<span>${label}</span>${drop ? arrow : nothing}</button>`;
  }

  private menuView() {
    return html`<div class="menu" role="menu">
      ${menu.map(([id, label, sep]) => html`
        <button role="menuitem" class=${classMap({ mi: true, hot: id === "update" })}>${menuIcons[id]}<span class=${id === "update" ? "key" : ""}>${label}</span>
          ${id === "update" ? html`<span class="tip" role="tooltip">Update Source Documents</span>` : nothing}
        </button>${sep ? html`<div class="sep" role="separator"></div>` : nothing}`)}
    </div>`;
  }

  private ribbonView() {
    return html`<div class="ribbon">
      <div class="group">
        <div class="anchor">
          <button class="big items proj" aria-haspopup="menu" aria-expanded=${this.menuOpen} @click=${() => (this.menuOpen = !this.menuOpen)}>
            ${big.project}<span>Project</span>${arrow}</button>
          ${this.menuOpen ? this.menuView() : nothing}
        </div>
      </div>
      <div class="group edit">
        <div class="items">
          ${this.bigButton({ id: "select", label: "Select", size: "m", drop: true })}
          ${this.bigButton({ id: "deselect", label: "Deselect", size: "d", drop: true })}
          <div class="col">${this.sm("cut", "Cut", true)}${this.sm("copy", "Copy", true)}${this.sm("paste", "Paste")}</div>
        </div>
      </div>
      <div class="group circuit">
        <div class="items">
          ${circuit.map((i) => this.bigButton(i))}
          <div class="col harness">${this.sm("sigharness", "Signal Harness")}${this.sm("harnessconn", "Harness Connector")}${this.sm("harnessentry", "Harness Entry")}</div>
        </div>
        <div class="glabel">Circuit Elements</div>
      </div>
      <div class="group graph">
        <div class="items">
          <div class="gcols">${graphical.map(([i, l]) => this.sm(i, l))}</div>
          <div class="col links">${this.sm("hyperlink", "Hyperlink")}${this.sm("note", "Note")}</div>
        </div>
        <div class="glabel">Graphical Elements</div>
      </div>
      <div class="group fonts">
        <div class="items">
          <div class="frow">
            <span class="pick"><select aria-label="Font name"></select>${arrow}</span>
            <button aria-label="Grow font">A</button><button class="less" aria-label="Shrink font">A</button>
          </div>
          <div class="frow bius"><button>B</button><button class="it">I</button><button class="un">U</button><button class="st">S</button></div>
        </div>
        <div class="glabel">Font</div>
      </div>
      <div class="group appear">
        <div class="items">
          <div class="col links">
            <button class="sm off"><span class="swatch"></span>Color${arrow}</button>
            <button class="sm off"><span class="swatch"></span>Fill${arrow}</button>
          </div>
          <div class="col">${this.sm("linestyle", "Line Style", true, true)}${this.sm("linewidth", "Line Width", true, true)}${this.sm("lineend", "Line End Style", true, true)}</div>
        </div>
        <div class="glabel">Appearance</div>
      </div>
    </div>`;
  }

  private caret() {
    return html`<svg class="ic" width="10" height="7" viewBox="0 0 10 7" aria-hidden="true"><path d="M1 6l4-4 4 4" fill="none" stroke="#9a9a9a" stroke-width="2"/></svg>`;
  }

  private librariesView() {
    return html`<aside class="side libs">
      <div class="phead"><b>Libraries</b>
        ${icon(9, 9, svg`<path d="M1 2h7L4.500 7z" fill="#111"/>`)}
        ${icon(9, 9, svg`<path d="M2 0h5v5h1v1H5v3H4V6H1V5h1zM3 1v4h1V1z" fill="#111"/>`)}
        ${icon(9, 9, svg`<path d="M1.500 1.500l6 6M7.500 1.500l-6 6" stroke="#111" stroke-width="2"/>`)}
      </div>
      <div class="lbody">
        <div class="brow"><button>Libraries...</button><button>Search...</button><button class="wide">Place BNC</button></div>
        <div class="combo">
          ${icon(14, 14, svg`<path d="M4.500.5h6l3 3v10h-9z" fill="#e8f4f8" stroke="#9bb8c4"/><path d="M2 3h7v8H2z" fill=${BLUE}/><path d="M0 4.500h2M0 7h2M0 9.500h2M9 4.500h2M9 7h2M9 9.500h2" stroke=${TEAL}/>`)}
          <select aria-label="Library"><option>Miscellaneous Connectors.IntLib</option></select>
          ${icon(9, 6, svg`<path d="M.5.500l4 4 4-4" fill="none" stroke="#555"/>`)}
          <span class="more">${icon(10, 6, svg`<path d="M0 1h2l1 1 2-1 2 1 1-1h2v1L5 6 0 2z" fill="#000"/>`)}</span>
        </div>
        <div class="filter"><input aria-label="Filter components" />${icon(14, 14, svg`<circle cx="5.500" cy="5.500" r="4.500" fill="none" stroke="#aaa"/><path d="M9 9l4 4" stroke="#aaa" stroke-width="2"/>`)}</div>
        <div class="list">
          <table>
            <colgroup><col class="c1" /><col class="c2" /><col class="c3" /><col /></colgroup>
            <thead><tr><th>Libr...</th><th>Description</th><th>Footprint</th><th><div class="sort">Comp...${icon(8, 8, svg`<path d="M4.500.5L.5 7.500" stroke="#a0a0a0"/><path d="M4.500.5l3 7h-7" fill="none" stroke="#fff"/>`)}</div></th></tr></thead>
            <tbody>${parts.map((p, i) => html`<tr class=${i === 0 ? "row1" : ""}>
              <td>${icon(35, 16, svg`
                <path d="M7.500 ${i === 0 ? 8 : 0}V16M8 8.500H16" stroke="#777" stroke-dasharray="1 1"/>
                ${i === 3 ? svg`<path d="M3.500 4.500h8v8h-8z" fill="#fff" stroke="#555"/><path d="M5 8.500h5M7.500 6v5" stroke="#000"/>` : nothing}
                <path d="M19 1h10v13H19z" fill="url(#gb)"/><path d="M17 1v14M31 1v14" stroke=${TEAL} stroke-width="2" stroke-dasharray="2 1"/>`)}</td>
              <td><span>${p[0]}</span></td><td><span>${p[1]}</span></td><td><span>${p[2]}</span></td></tr>`)}</tbody>
          </table>
          <div class="vs"><button aria-label="Scroll up">${chevron(UP)}</button><div class="thumb"></div><div class="b"></div><button aria-label="Scroll down">${chevron(DOWN)}</button></div>
        </div>
        <h2 class="part">BNC</h2>
        <div class="sec"><h2>Symbol</h2>${this.caret()}</div>
        <svg class="pv sym" role="img" aria-label="BNC symbol">
          <text class="tn" x="104" y="9">P?</text><circle class="zig" cx="115.500" cy="23.500" r="11.500"/><circle class="pt" cx="115.500" cy="23.500" r="2.500"/>
          <path class="blu" d="M118 23.500h9" stroke-dasharray="3 2"/><path class="blk" d="M127 23.500h12M116.500 35v12"/><text class="tn" x="104" y="58">BNC</text>
        </svg>
        <div class="sec"><h2>Footprints</h2>${this.caret()}</div>
        <svg class="pv fp" role="img" aria-label="BNC footprint">
          <path d="M77 17.500h34M77 44.500h34M111.500 13v36" stroke="#fff" fill="none"/><circle cx="89" cy="31" r="2.500" fill="none" stroke="#fff"/>
          <path d="M112 15l21 9M112 24l21 12M112 35l21 12" stroke="#fff" stroke-dasharray="1 3"/>
          <circle cx="156" cy="16.500" r="3.500" fill="#fff" stroke="#c4ae26" stroke-width="2"/><circle cx="156" cy="45.500" r="3.500" fill="#fff" stroke="#c4ae26" stroke-width="2"/>
          <path d="M169.500 29.500h3v3h-3z" fill="#fff" stroke="#c4ae26"/><circle cx="171" cy="38.500" r="1.500" fill="#fff" stroke="#c4ae26"/>
          <path d="M8.500 28.500h24v24h-24z" fill="#eef0f0" stroke="#555"/><path d="M12 45l9-10" stroke="#8a7240" stroke-width="2"/><path d="M15 32l8 2 2 5-3 1-2-4-5-2z" fill="#6f86ac"/><path d="M19 40h11l-4 4v6l-3 1v-7z" fill="#a9bcd6" stroke="#64789c"/>
        </svg>
        <svg class="thumbnail" role="img" aria-label="Footprint thumbnail">
          <path d="M2.500 17.500h13v11h-13zM26.500 14.500h15v16h-15zM28.500 16.500h9v12h-9z" fill="none" stroke="#cfe0e4"/><path d="M15 16h10v14H15z" fill="#cfe0e4"/>
          <circle cx="8" cy="23" r="1" fill="#fff"/><path d="M12 20v-5h3v5M18 18v3M20 24v4M22 17v3" stroke="#fff" fill="none"/><path d="M18 22v3M22 22v3" stroke="#000"/><path d="M32 16h4v3h-4zM32 26h4v3h-4zM39 22h2v2h-2z" fill="#bbb"/>
        </svg>
        <div class="sec"><h2>Pricing</h2>${this.caret()}</div>
        <table class="prices">
          <colgroup><col class="p1" /><col class="p2" /><col class="p3" /><col /></colgroup>
          <thead><tr><th><span>Supplier</span></th><th><span>Manufactu...</span></th><th><span>Description</span></th><th><span>Unit P...</span></th></tr></thead>
        </table>
      </div>
    </aside>`;
  }

  render() {
    return html`
      <svg class="defs" aria-hidden="true"><defs><linearGradient id="gb" x1="0" y1="0" x2="0" y2="1"><stop offset="0" stop-color="#0084b4"/><stop offset="1" stop-color="#006a98"/></linearGradient></defs></svg>
      <header class="title">
        <div class="quick">${logoIcon}<span class="bar"></span>${openIcon}${saveIcon}${undoIcon}${redoIcon}<span class="bar last"></span></div>
        <div class="caption">CircuitStudio (1.1) - Alarm_555_Schematic.SchDoc - Alarm_PCB_555.PrjPcb</div>
        <div class="win">
          <button aria-label="Minimize">${icon(11, 11, svg`<path d="M0 5.500h10" stroke="#333"/>`)}</button>
          <button aria-label="Restore">${icon(11, 11, svg`<path d="M.5 3.500h7v7h-7zM3 3V.5h7.500V8H8" fill="none" stroke="#333"/>`)}</button>
          <button aria-label="Close">${icon(11, 11, svg`<path d="M.5.5l10 10M10.500.5l-10 10" stroke="#333"/>`)}</button>
        </div>
      </header>
      <nav class="tabs">
        <button class="file">File</button><button class="tab on">Home</button>
        ${["View", "Project", "Tools", "Outputs"].map((l) => html`<button class="tab">${l}</button>`)}
        <label class="find"><input type="text" aria-label="Search commands" placeholder="Type here to search" />
          ${icon(15, 15, svg`<circle cx="9" cy="5.500" r="4.500" fill="none" stroke="#555" stroke-width="1.500"/><path d="M6 9l-5 5" stroke="#555" stroke-width="2"/>`)}</label>
        <button class="fold" aria-label="Collapse ribbon">${icon(10, 8, svg`<path d="M1 4l4-3.500L9 4M1 7l4-3.500L9 7z" fill="none" stroke="#777"/>`)}</button>
      </nav>
      ${this.ribbonView()}
      <main>
        <aside class="side"><div class="phead"></div><div class="tree"></div></aside>
        <section class="center">
          <div class="docs">
            <button class="home">Home</button>
            <button class="on">${icon(13, 13, svg`<path d="M.5 2.500h12v9H.5z" fill="#dff5f5" stroke="#0f8f95"/><path d="M6 8.500h6M6.500 8v3" stroke="#0f8f95"/>`)}Alarm_555_Schematic.SchDoc</button>
            <button>${icon(12, 13, svg`<path d="M1 1h4v1h2V1h4v12H1z" fill="#0ba53c"/><path d="M3 3h6v8H3z" fill="#111"/><path d="M4.500 4v6M7.500 4v6" stroke="#6a8a20"/><path d="M.5 2v10M11.500 2v10" stroke="#0ba53c" stroke-dasharray="2 1"/>`)}Alarm_555_PCB.CSPcbDoc</button>
          </div>
          <div class="work">
            <svg class="canvas" role="img" aria-label="Alarm 555 schematic">${schematic()}</svg>
            <div class="vs"><button aria-label="Scroll up">${chevron(UP)}</button><div class="a"></div><div class="thumb"></div><div class="b"></div><button aria-label="Scroll down">${chevron(DOWN)}</button></div>
            <div class="hs"><button aria-label="Scroll left">${chevron(LEFT)}</button><div class="a"></div><div class="thumb"></div><div class="b"></div><button aria-label="Scroll right">${chevron(RIGHT)}</button></div>
          </div>
          <div class="btabs"><button class="ed">Editor</button><button class="on">Alarm_555_Schematic</button></div>
        </section>
        ${this.librariesView()}
      </main>
      <footer><div class="pos"><span>X:520 Y:730</span><span>Grid:10</span></div><div class="cell"></div><div class="cell"></div></footer>
    `;
  }
}
